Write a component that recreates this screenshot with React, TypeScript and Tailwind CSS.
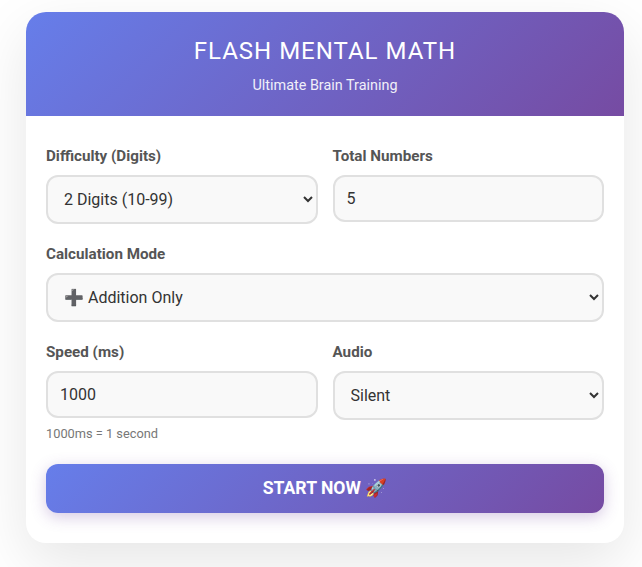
const fieldClass =
  "w-full rounded-[12px] border-2 border-[#e0e0e0] bg-[#f9f9f9] text-[16px] text-[#333] outline-none";

function Label({ children }: { children: React.ReactNode }) {
  return <label className="mb-[10px] block text-[15.2px] leading-[18px] font-bold text-[#555]">{children}</label>;
}

export default function App() {
  return (
    <div className="h-[567px] overflow-hidden bg-white pt-[12px] pr-[18px] pl-[26px] font-['Roboto',sans-serif]">
      <div className="overflow-hidden rounded-[20px] bg-white shadow-[0_20px_60px_rgba(0,0,0,0.1)]">
        <header className="h-[104px] bg-linear-[135deg,#667eea_0%,#764ba2_100%] pt-[25px] text-center text-white">
          <h1 className="text-[24px] leading-[28px] font-normal tracking-[1px]">FLASH MENTAL MATH</h1>
          <p className="mt-[13px] text-[14.4px] leading-[16px] opacity-90">Ultimate Brain Training</p>
        </header>

        <form className="px-[20px] pt-[31px] pb-[30px]">
          <div className="grid grid-cols-2 gap-x-[15px]">
            <div>
              <Label>Difficulty (Digits)</Label>
              <select className={`${fieldClass} h-[49px] pl-[12px]`} defaultValue="2">
                <option value="2">2 Digits (10-99)</option>
              </select>
            </div>
            <div>
              <Label>Total Numbers</Label>
              <input className={`${fieldClass} h-[47px] px-[12px]`} type="number" defaultValue={5} />
            </div>
          </div>

          <div className="mt-[21px]">
            <Label>Calculation Mode</Label>
            <select className={`${fieldClass} h-[49px] pl-[12px]`} defaultValue="add">
              <option value="add">➕ Addition Only</option>
            </select>
          </div>

          <div className="mt-[21px] grid grid-cols-2 gap-x-[15px]">
            <div>
              <Label>Speed (ms)</Label>
              <input className={`${fieldClass} h-[47px] px-[12px]`} type="number" defaultValue={1000} />
              <p className="mt-[8px] pt-px text-[12.8px] leading-[14px] text-[#777]">1000ms = 1 second</p>
            </div>
            <div>
              <Label>Audio</Label>
              <select className={`${fieldClass} h-[49px] pl-[12px]`} defaultValue="silent">
                <option value="silent">Silent</option>
              </select>
            </div>
          </div>

          <button
            type="button"
            className="mt-[23px] h-[49px] w-full rounded-[12px] bg-linear-[135deg,#667eea_0%,#764ba2_100%] text-[17.6px] font-bold text-white shadow-[0_4px_15px_rgba(118,75,162,0.3)]"
          >
            START NOW 🚀
          </button>
        </form>
      </div>
    </div>
  );
}
